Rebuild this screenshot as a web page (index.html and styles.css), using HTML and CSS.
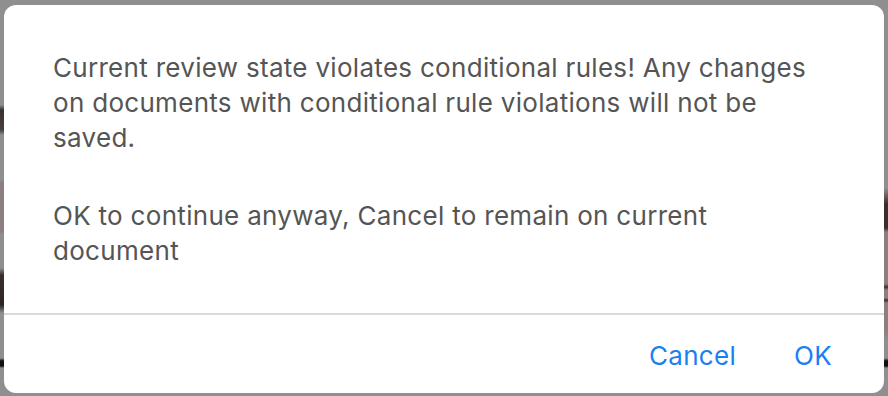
FILE: index.html
```html
<!DOCTYPE html>
<html>
<head>
<meta charset="utf-8">
<link rel="stylesheet" href="styles.css">
</head>
<body>
<div class="backdrop">
  <div class="dialog">
    <div class="message">
      <p>Current review state violates conditional rules! Any changes on documents with conditional rule violations will not be saved.</p>
      <p>OK to continue anyway, Cancel to remain on current document</p>
    </div>
    <div class="actions">
      <button class="btn">Cancel</button>
      <button class="btn">OK</button>
    </div>
  </div>
</div>
</body>
</html>
```
FILE: styles.css
```css
html, body {
  margin: 0;
  padding: 0;
  width: 888px;
  height: 396px;
  overflow: hidden;
  background: #8f8f8f;
}
.backdrop {
  box-sizing: border-box;
  width: 888px;
  height: 396px;
  padding: 5px 4px 3px 4px;
  background:
    linear-gradient(to bottom, transparent 0, transparent 105px, #3a3030 110px, #4a4040 130px, transparent 135px, transparent 180px, #8b7f7f 182px, #8b7f7f 232px, transparent 234px, transparent 268px, #3a2f2f 275px, #2e2626 305px, transparent 313px, transparent 358px, #111 361px, #111 366px, transparent 368px) left top / 4px 100% no-repeat,
    linear-gradient(to bottom, transparent 0, transparent 188px, #8b7f7f 190px, #3a2f2f 204px, #3a2f2f 228px, #8b7f7f 232px, #8b7f7f 284px, #333 287px, #8b7f7f 290px, #8b7f7f 298px, #333 300px, #8b7f7f 303px, #8b7f7f 330px, transparent 340px, transparent 358px, #111 361px, #111 366px, transparent 368px) right top / 4px 100% no-repeat,
    #8f8f8f;
}
.dialog {
  box-sizing: border-box;
  width: 880px;
  height: 388px;
  background: #fff;
  border-radius: 12px;
  display: flex;
  flex-direction: column;
  font-family: Inter, "Liberation Sans", Arial, sans-serif;
  letter-spacing: 0.3px;
}
.message {
  flex: 1 1 auto;
  min-height: 0;
  padding: 45px 51px 0 49px;
  color: #555555;
  font-size: 26px;
  line-height: 35px;
}
.message p {
  margin: 0 0 43px 0;
}
.message p:last-child {
  margin-bottom: 0;
}
.actions {
  box-sizing: border-box;
  flex: 0 0 80px;
  height: 80px;
  border-top: 2px solid #d9d9d9;
  display: flex;
  justify-content: flex-end;
  align-items: flex-start;
  gap: 58px;
  padding: 25px 52px 0 0;
}
.btn {
  border: 0;
  background: none;
  padding: 0;
  font-family: Inter, "Liberation Sans", Arial, sans-serif;
  font-size: 26px;
  line-height: 32px;
  letter-spacing: 0.3px;
  color: #1a7ff0;
}
```
